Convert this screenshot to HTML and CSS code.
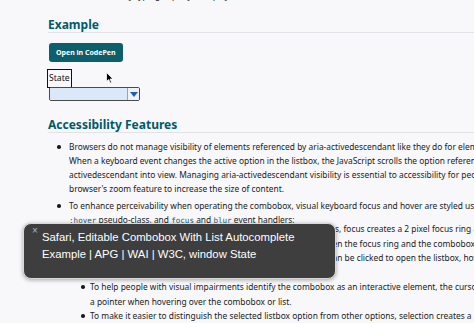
FILE: index.html
```html
<!DOCTYPE html>
<html lang="en">
<head>
<meta charset="utf-8">
<title>Editable Combobox With List Autocomplete Example</title>
<link rel="stylesheet" href="styles.css">
</head>
<body>
<div class="page">
  <p class="intro">that is, by typing a query it displays</p>
  <h2 class="section-title">Example</h2>
  <a class="codepen-btn" href="#">Open in CodePen</a>
  <div class="combo-field">
    <label class="combo-label" for="cb1-input">State</label>
    <div class="combo">
      <input class="combo-input" id="cb1-input" type="text">
      <span class="combo-button">
        <svg width="8" height="5" viewBox="0 0 8 5"><path d="M0 0H8L4 5Z" fill="#1a5fb4"/></svg>
      </span>
    </div>
  </div>
  <h2 class="section-title section-title--second">Accessibility Features</h2>
  <ul class="features">
    <li class="features-first">Browsers do not manage visibility of elements referenced by aria-activedescendant like they do for elements that receive DOM focus.<br>When a keyboard event changes the active option in the listbox, the JavaScript scrolls the option referenced by aria-<br>activedescendant into view. Managing aria-activedescendant visibility is essential to accessibility for people who use a<br>browser's zoom feature to increase the size of content.</li>
    <li>To enhance perceivability when operating the combobox, visual keyboard focus and hover are styled using the CSS<br><code>:hover</code> pseudo-class, and <code>focus</code> and <code>blur</code> event handlers:
      <ul class="features features--nested">
        <li>When a combobox or the button receives visual keyboard focus, focus creates a 2 pixel focus ring around the combobox.<br>The focus ring has a 1 pixel white border, clear contrast between the focus ring and the combobox border.<br>Although the button is removed from screen reader users, it can be clicked to open the listbox, however it is<br>not in the tab sequence.</li>
        <li>To help people with visual impairments identify the combobox as an interactive element, the cursor is changed to<br>a pointer when hovering over the combobox or list.</li>
        <li>To make it easier to distinguish the selected listbox option from other options, selection creates a 2 pixel border above and below the option.</li>
      </ul>
    </li>
  </ul>
</div>
<div class="caption-panel">
  <span class="caption-close">×</span>
  <p class="caption-text">Safari, Editable Combobox With List Autocomplete<br>Example | APG | WAI | W3C, window State</p>
</div>
<svg class="pointer" width="8" height="12" viewBox="0 0 8 12"><path d="M0.5 0.5V9.5L2.7 7.5L4.3 11L5.6 10.4L4.1 7H7Z" fill="#000" stroke="#fff" stroke-width="0.8"/></svg>
</body>
</html>
```

FILE: styles.css
```css
html, body {
  margin: 0;
  padding: 0;
  overflow: hidden;
}
body {
  width: 474px;
  height: 323px;
  background: #f8f8fa;
  font-family: "Noto Sans", "Open Sans", sans-serif;
  color: #1a1a1a;
  position: relative;
}
.page {
  padding-left: 48px;
  width: 900px;
}
.intro {
  margin: -11px 0 0 47px;
  font-size: 8.4px;
  line-height: 14px;
  white-space: nowrap;
}
.section-title {
  margin: 14.5px 0 0 0;
  font-size: 12px;
  line-height: 14px;
  font-weight: 700;
  color: #005a6a;
  border-bottom: 1px solid #e2e3e6;
}
.section-title--second {
  margin-top: 17px;
}
.codepen-btn {
  display: block;
  width: fit-content;
  margin: 10.5px 0 0 1px;
  padding: 0 7px;
  height: 19px;
  line-height: 19px;
  border-radius: 3px;
  background: #0d5f6c;
  color: #fff;
  font-size: 7px;
  font-weight: 700;
  text-decoration: none;
}
.combo-field {
  margin-top: 7px;
  display: flex;
  flex-direction: column;
  align-items: flex-start;
}
.combo-label {
  display: block;
  border: 1px solid #111;
  padding: 0 1px;
  font-size: 8.6px;
  line-height: 17px;
  color: #111;
  margin-left: -1px;
}
.combo {
  display: flex;
  margin: -1px 0 0 1px;
  width: 91px;
  height: 14px;
  box-sizing: border-box;
  border: 1px solid #4a4a4a;
  border-radius: 2px;
  overflow: hidden;
}
.combo-input {
  flex: 1;
  min-width: 0;
  border: 0;
  padding: 0;
  margin: 0;
  background: #dbe8f9;
  outline: none;
}
.combo-button {
  width: 11px;
  display: flex;
  align-items: center;
  justify-content: center;
  background: #eef2f7;
  border-left: 1px solid #9aa4b0;
}
.features {
  list-style: none;
  margin: 7px 0 0 0;
  padding-left: 21px;
  font-size: 8.4px;
  line-height: 14px;
  white-space: nowrap;
}
.features li {
  position: relative;
  margin-bottom: 4px;
}
.features .features-first {
  margin-bottom: 3px;
}
.features li::before {
  content: "";
  position: absolute;
  left: -12px;
  top: 5px;
  width: 3.5px;
  height: 3.5px;
  border-radius: 50%;
  background: #1d1d1d;
}
.features--nested {
  margin-top: -6px;
  padding-left: 21px;
  line-height: 14.5px;
}
.features--nested li {
  margin-bottom: 0;
}
.features--nested li::before {
  left: -9px;
}
code {
  font-family: "DejaVu Sans Mono", "Liberation Mono", monospace;
  font-size: 7.6px;
  color: #1e5878;
}
.caption-panel {
  position: absolute;
  left: 23px;
  top: 223px;
  width: 313px;
  height: 56px;
  box-sizing: border-box;
  background: #3e3e3f;
  border: 1px solid #d8d8d8;
  border-radius: 8px;
  box-shadow: 0 1px 4px rgba(0, 0, 0, 0.35);
  padding: 5px 0 0 18px;
}
.caption-close {
  position: absolute;
  left: 8px;
  top: 1px;
  color: #b5b5b5;
  font-family: "Liberation Sans", Arial, sans-serif;
  font-size: 10px;
}
.caption-text {
  margin: 0;
  color: #fff;
  font-family: "Liberation Sans", Arial, sans-serif;
  font-size: 11.3px;
  line-height: 17px;
}
.pointer {
  position: absolute;
  left: 106px;
  top: 72px;
}
```
